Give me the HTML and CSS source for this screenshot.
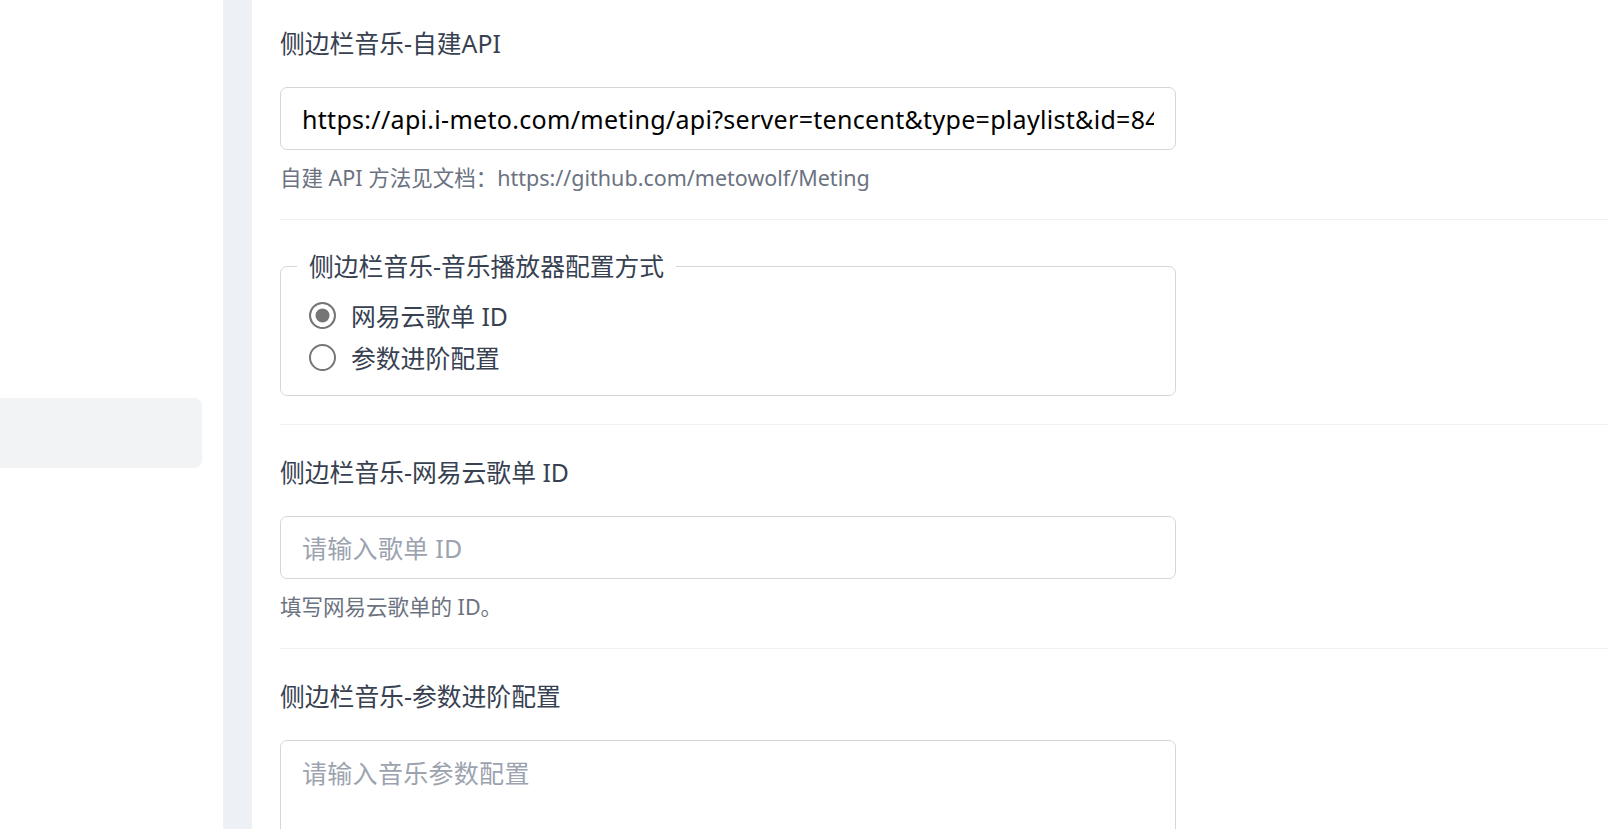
FILE: index.html
```html
<!DOCTYPE html>
<html lang="zh-CN">
<head>
<meta charset="utf-8">
<title>侧边栏音乐设置</title>
<link rel="stylesheet" href="styles.css">
</head>
<body>
<div class="layout">
  <aside class="sidebar">
    <nav class="nav">
      <a class="nav-item active" href="#"></a>
    </nav>
  </aside>
  <main class="main">
    <div class="card">
      <div class="field first">
        <label class="label" for="api">侧边栏音乐-自建API</label>
        <input class="input" id="api" type="text" value="https://api.i-meto.com/meting/api?server=tencent&amp;type=playlist&amp;id=8478412374">
        <p class="help">自建 API 方法见文档：https://github.com/metowolf/Meting</p>
      </div>
      <div class="field fs-field">
        <fieldset class="fieldset">
          <legend class="legend">侧边栏音乐-音乐播放器配置方式</legend>
          <div class="radios">
            <label class="radio-row"><input class="radio" type="radio" name="mode" checked><span>网易云歌单 ID</span></label>
            <label class="radio-row"><input class="radio" type="radio" name="mode"><span>参数进阶配置</span></label>
          </div>
        </fieldset>
      </div>
      <div class="field">
        <label class="label" for="pid">侧边栏音乐-网易云歌单 ID</label>
        <input class="input" id="pid" type="text" placeholder="请输入歌单 ID">
        <p class="help">填写网易云歌单的 ID。</p>
      </div>
      <div class="field">
        <label class="label" for="cfg">侧边栏音乐-参数进阶配置</label>
        <textarea class="textarea" id="cfg" placeholder="请输入音乐参数配置"></textarea>
      </div>
    </div>
  </main>
</div>
</body>
</html>
```
FILE: styles.css
```css
* { box-sizing: border-box; }
html, body {
  margin: 0;
  padding: 0;
  height: 100%;
  overflow: hidden;
}
body {
  font-family: "Noto Sans", "Noto Sans CJK SC", sans-serif;
  color: #374151;
  background: #fff;
}
.layout {
  display: flex;
  min-height: 100vh;
}
.sidebar {
  width: 223px;
  flex: none;
  background: #fff;
}
.nav {
  display: flex;
  flex-direction: column;
  padding-top: 398px;
}
.nav-item {
  display: block;
  width: 202px;
  height: 70px;
  border-radius: 0 8px 8px 0;
}
.nav-item.active { background: #f2f3f5; }
.main {
  flex: 1;
  background: #edf0f4;
  padding-left: 29px;
  display: flex;
}
.card {
  flex: 1;
  background: #fff;
  padding-left: 28px;
}
.field {
  border-top: 1px solid #f1f1f3;
  padding: 29px 0 26px;
}
.field.first {
  border-top: 0;
  padding-top: 25px;
}
.field.fs-field {
  padding-top: 28px;
  padding-bottom: 28px;
}
.label {
  display: block;
  font-size: 24.8px;
  line-height: 36px;
  margin-bottom: 26px;
  color: #374151;
}
.input, .textarea {
  display: block;
  width: 896px;
  border: 1px solid #d4d6dc;
  border-radius: 7px;
  background: #fff;
  font-family: inherit;
  font-size: 25px;
  letter-spacing: 0.3px;
  color: #000;
  padding: 0 21px;
  outline: none;
}
.input { height: 63px; }
.textarea {
  height: 160px;
  padding-top: 14px;
  line-height: 36px;
  resize: none;
}
.input::placeholder, .textarea::placeholder { color: #9ca3af; }
.help {
  margin: 13px 0 0;
  font-size: 21.5px;
  line-height: 30px;
  color: #6b7280;
}
.fieldset {
  width: 896px;
  margin: 0;
  border: 1px solid #d4d6dc;
  border-radius: 7px;
  padding: 10px 16px 17px;
}
.legend {
  font-size: 24.8px;
  line-height: 36px;
  padding: 0 12px;
  color: #374151;
}
.radios {
  display: flex;
  flex-direction: column;
  padding-left: 12px;
}
.radio-row {
  display: flex;
  align-items: center;
  gap: 15px;
  height: 42px;
  font-size: 24.8px;
  color: #374151;
}
.radio {
  appearance: none;
  -webkit-appearance: none;
  width: 27px;
  height: 27px;
  margin: 0;
  border: 2px solid #767676;
  border-radius: 50%;
  background: #fff;
  flex: none;
}
.radio:checked {
  background: #767676;
  box-shadow: inset 0 0 0 4.5px #fff;
}
```
